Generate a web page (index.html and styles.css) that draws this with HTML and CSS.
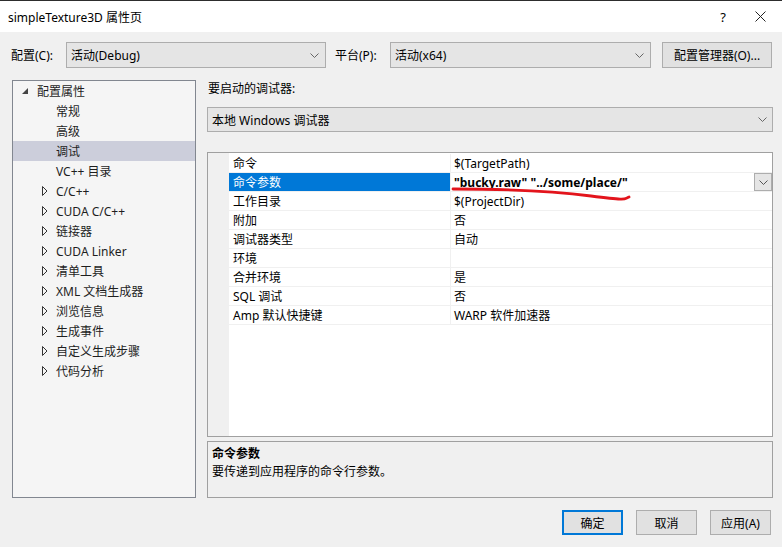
FILE: index.html
```html
<!DOCTYPE html>
<html lang="zh-CN">
  <head>
    <meta charset="UTF-8" />
    <title>simpleTexture3D 属性页</title>
    <link rel="stylesheet" href="styles.css">
  </head>
  <body>
    <div class="window">
      <div class="titlebar">
        <span class="title">simpleTexture3D 属性页</span>
        <span class="tb-help">?</span>
        <span class="tb-close">
          <svg width="11" height="11" viewBox="0 0 11 11"><path d="M0.5 0.5 L10.5 10.5 M10.5 0.5 L0.5 10.5" stroke="#222" stroke-width="1" fill="none"/></svg>
        </span>
      </div>

      <div class="toolbar">
        <span class="tool-label">配置(C):</span>
        <div class="select select-cfg">
          <span>活动(Debug)</span>
          <svg class="chev" width="9" height="5" viewBox="0 0 9 5"><path d="M0.5 0.5 L4.5 4.5 L8.5 0.5" stroke="#666" fill="none"/></svg>
        </div>
        <span class="tool-label label-plat">平台(P):</span>
        <div class="select select-plat">
          <span>活动(x64)</span>
          <svg class="chev" width="9" height="5" viewBox="0 0 9 5"><path d="M0.5 0.5 L4.5 4.5 L8.5 0.5" stroke="#666" fill="none"/></svg>
        </div>
        <button class="btn btn-mgr">配置管理器(O)...</button>
      </div>

      <div class="main">
        <div class="tree">
          <div class="tree-row root">
            <span class="arrow"><svg width="6" height="6" viewBox="0 0 6 6"><polygon points="6,0 6,6 0,6" fill="#444"/></svg></span>
            <span>配置属性</span>
          </div>
          <div class="tree-row child"><span class="arrow"></span><span>常规</span></div>
          <div class="tree-row child"><span class="arrow"></span><span>高级</span></div>
          <div class="tree-row child selected"><span class="arrow"></span><span>调试</span></div>
          <div class="tree-row child"><span class="arrow"></span><span>VC++ 目录</span></div>
          <div class="tree-row child"><span class="arrow"><svg width="6" height="10" viewBox="0 0 6 10"><polygon points="0.5,0.5 5,5 0.5,9.5" fill="none" stroke="#333"/></svg></span><span>C/C++</span></div>
          <div class="tree-row child"><span class="arrow"><svg width="6" height="10" viewBox="0 0 6 10"><polygon points="0.5,0.5 5,5 0.5,9.5" fill="none" stroke="#333"/></svg></span><span>CUDA C/C++</span></div>
          <div class="tree-row child"><span class="arrow"><svg width="6" height="10" viewBox="0 0 6 10"><polygon points="0.5,0.5 5,5 0.5,9.5" fill="none" stroke="#333"/></svg></span><span>链接器</span></div>
          <div class="tree-row child"><span class="arrow"><svg width="6" height="10" viewBox="0 0 6 10"><polygon points="0.5,0.5 5,5 0.5,9.5" fill="none" stroke="#333"/></svg></span><span>CUDA Linker</span></div>
          <div class="tree-row child"><span class="arrow"><svg width="6" height="10" viewBox="0 0 6 10"><polygon points="0.5,0.5 5,5 0.5,9.5" fill="none" stroke="#333"/></svg></span><span>清单工具</span></div>
          <div class="tree-row child"><span class="arrow"><svg width="6" height="10" viewBox="0 0 6 10"><polygon points="0.5,0.5 5,5 0.5,9.5" fill="none" stroke="#333"/></svg></span><span>XML 文档生成器</span></div>
          <div class="tree-row child"><span class="arrow"><svg width="6" height="10" viewBox="0 0 6 10"><polygon points="0.5,0.5 5,5 0.5,9.5" fill="none" stroke="#333"/></svg></span><span>浏览信息</span></div>
          <div class="tree-row child"><span class="arrow"><svg width="6" height="10" viewBox="0 0 6 10"><polygon points="0.5,0.5 5,5 0.5,9.5" fill="none" stroke="#333"/></svg></span><span>生成事件</span></div>
          <div class="tree-row child"><span class="arrow"><svg width="6" height="10" viewBox="0 0 6 10"><polygon points="0.5,0.5 5,5 0.5,9.5" fill="none" stroke="#333"/></svg></span><span>自定义生成步骤</span></div>
          <div class="tree-row child"><span class="arrow"><svg width="6" height="10" viewBox="0 0 6 10"><polygon points="0.5,0.5 5,5 0.5,9.5" fill="none" stroke="#333"/></svg></span><span>代码分析</span></div>
        </div>

        <div class="panel">
          <div class="panel-label">要启动的调试器:</div>
          <div class="select select-debugger">
            <span>本地 Windows 调试器</span>
            <svg class="chev" width="9" height="5" viewBox="0 0 9 5"><path d="M0.5 0.5 L4.5 4.5 L8.5 0.5" stroke="#666" fill="none"/></svg>
          </div>

          <div class="grid">
            <div class="prop-row"><div class="prop-name">命令</div><div class="prop-value">$(TargetPath)</div></div>
            <div class="prop-row active">
              <div class="prop-name">命令参数</div>
              <div class="prop-value">
                <span class="edit-text">"bucky.raw" "../some/place/"</span>
                <span class="drop-btn"><svg width="9" height="5" viewBox="0 0 9 5"><path d="M0.5 0.5 L4.5 4.5 L8.5 0.5" stroke="#555" fill="none"/></svg></span>
              </div>
            </div>
            <div class="prop-row"><div class="prop-name">工作目录</div><div class="prop-value">$(ProjectDir)</div></div>
            <div class="prop-row"><div class="prop-name">附加</div><div class="prop-value">否</div></div>
            <div class="prop-row"><div class="prop-name">调试器类型</div><div class="prop-value">自动</div></div>
            <div class="prop-row"><div class="prop-name">环境</div><div class="prop-value"></div></div>
            <div class="prop-row"><div class="prop-name">合并环境</div><div class="prop-value">是</div></div>
            <div class="prop-row"><div class="prop-name">SQL 调试</div><div class="prop-value">否</div></div>
            <div class="prop-row"><div class="prop-name">Amp 默认快捷键</div><div class="prop-value">WARP 软件加速器</div></div>

            <!-- hand-drawn red mark under the argument value -->
            <svg class="scribble" width="190" height="22" viewBox="0 0 190 22">
              <path d="M2 7 C 60 7, 100 9, 140 14 S 172 17, 178 15" stroke="#e3141c" stroke-width="2.8" stroke-linecap="round" fill="none"/>
            </svg>
          </div>

          <div class="desc">
            <div class="desc-title">命令参数</div>
            <div>要传递到应用程序的命令行参数。</div>
          </div>
        </div>
      </div>

      <div class="footer">
        <button class="btn btn-foot default">确定</button>
        <button class="btn btn-foot">取消</button>
        <button class="btn btn-foot">应用(A)</button>
      </div>
    </div>
  </body>
</html>
```

FILE: styles.css
```css
body {
  margin: 0;
  font-family: "Noto Sans", "Noto Sans CJK SC", sans-serif;
  font-size: 12px;
  color: #000;
  background-color: #f0f0f0;
}
.window {
  width: 782px;
  height: 547px;
  background-color: #f0f0f0;
  overflow: hidden;
}
.titlebar {
  height: 32px;
  box-sizing: border-box;
  border-top: 1px solid #2d2d2d;
  background-color: #fff;
  display: flex;
  align-items: center;
  padding-left: 8px;
}
.title {
  flex: 1;
  font-size: 12px;
}
.tb-help {
  width: 20px;
  margin-right: 22px;
  font-size: 13px;
  text-align: center;
}
.tb-close {
  display: flex;
  margin-right: 16px;
}
.toolbar {
  display: flex;
  align-items: center;
  padding: 10px 0 0 11px;
  height: 26px;
}
.tool-label {
  width: 55px;
}
.label-plat {
  margin-left: 9px;
}
.select {
  height: 26px;
  box-sizing: border-box;
  border: 1px solid #adadad;
  background-color: #e5e5e5;
  display: flex;
  align-items: center;
  justify-content: space-between;
  padding: 0 6px 0 4px;
}
.select-cfg {
  width: 260px;
}
.select-plat {
  width: 261px;
}
.chev {
  display: block;
}
.btn {
  font-family: inherit;
  font-size: 12px;
  color: #000;
  background-color: #e1e1e1;
  border: 1px solid #adadad;
  box-sizing: border-box;
  padding: 0;
  cursor: pointer;
}
.btn-mgr {
  width: 110px;
  height: 26px;
  margin-left: 11px;
}
.main {
  display: flex;
  gap: 11px;
  margin-top: 12px;
  padding-left: 12px;
  height: 418px;
}
.tree {
  width: 184px;
  box-sizing: border-box;
  border: 1px solid #828790;
  background-color: #f5f5f5;
  color: #1e1e1e;
}
.tree-row {
  height: 20px;
  display: flex;
  align-items: center;
}
.tree-row.root {
  padding-left: 9px;
}
.tree-row.root .arrow {
  width: 15px;
}
.tree-row.child {
  padding-left: 29px;
}
.tree-row .arrow {
  width: 14px;
  display: flex;
  align-items: center;
}
.tree-row.selected {
  background-color: #cccedb;
}
.panel {
  width: 566px;
  display: flex;
  flex-direction: column;
}
.panel-label {
  height: 18px;
  line-height: 18px;
  padding-left: 1px;
}
.select-debugger {
  margin-top: 9px;
  height: 25px;
  padding-right: 5px;
}
.grid {
  position: relative;
  margin-top: 20px;
  height: 285px;
  box-sizing: border-box;
  padding-top: 1px;
  border: 1px solid #a0a0a0;
  background: linear-gradient(to right, #f0f0f0 21px, #fff 21px);
}
.prop-row {
  margin-left: 21px;
  height: 19px;
  box-sizing: border-box;
  border-bottom: 1px solid #f0f0f0;
  display: flex;
}
.prop-name {
  width: 221px;
  padding-left: 4px;
  box-sizing: border-box;
  line-height: 19px;
}
.prop-value {
  flex: 1;
  border-left: 1px solid #f0f0f0;
  padding-left: 3px;
  line-height: 19px;
  display: flex;
  align-items: center;
}
.prop-row.active .prop-name {
  background-color: #0078d7;
  color: #fff;
}
.edit-text {
  flex: 1;
  font-weight: bold;
}
.drop-btn {
  width: 18px;
  height: 18px;
  box-sizing: border-box;
  border: 1px solid #adadad;
  background-color: #e5e5e5;
  display: flex;
  align-items: center;
  justify-content: center;
}
.scribble {
  position: absolute;
  left: 243px;
  top: 29px;
}
.desc {
  margin-top: 4px;
  height: 57px;
  box-sizing: border-box;
  border: 1px solid #a0a0a0;
  background-color: #f0f0f0;
  padding: 3px 4px;
  line-height: 18px;
}
.desc-title {
  font-weight: bold;
}
.footer {
  display: flex;
  justify-content: flex-end;
  gap: 13px;
  margin-top: 12px;
  padding-right: 11px;
}
.btn-foot {
  width: 61px;
  height: 25px;
}
.btn-foot.default {
  border: 2px solid #0078d7;
}
```
